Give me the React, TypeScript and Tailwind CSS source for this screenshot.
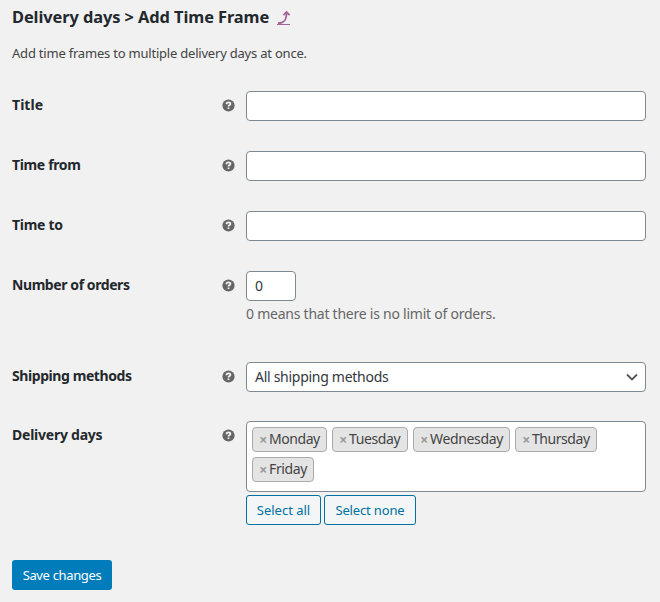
import { useState } from "react";

const allDays = ["Monday", "Tuesday", "Wednesday", "Thursday", "Friday"];

const tagStyles: Record<string, string> = {
  Monday: "w-[75px] tracking-[-0.45px]",
  Tuesday: "w-[76px] tracking-[-0.4px]",
  Wednesday: "w-[97px] tracking-[-0.35px]",
  Thursday: "w-[82px] tracking-[-0.45px]",
  Friday: "w-[62px] tracking-[-0.35px]",
};

function HelpTip() {
  return (
    <svg className="mt-[8px] mr-[11px] h-[13px] w-[13px] shrink-0" viewBox="0 0 13 13">
      <circle cx="6.5" cy="6.5" r="6.1" fill="#666" />
      <path
        d="M4.5 5.2C4.5 3.9 5.3 3.4 6.4 3.4C7.6 3.4 8.4 4 8.4 4.9C8.4 6.1 6.5 6.1 6.5 7.6M6.5 8.4V10.1"
        fill="none"
        stroke="#f1f1f1"
        strokeWidth="1.8"
      />
    </svg>
  );
}

function Row({
  label,
  tracking,
  className,
  children,
}: {
  label: string;
  tracking: string;
  className: string;
  children: React.ReactNode;
}) {
  return (
    <div className={`flex items-start ${className}`}>
      <div className="flex w-[234px] shrink-0 justify-between">
        <label className={`pt-[4px] text-[14px] leading-[20px] font-bold whitespace-nowrap text-[#23282d] ${tracking}`}>
          {label}
        </label>
        <HelpTip />
      </div>
      <div className="w-[400px] shrink-0">{children}</div>
    </div>
  );
}

export default function App() {
  const [title, setTitle] = useState("");
  const [timeFrom, setTimeFrom] = useState("");
  const [timeTo, setTimeTo] = useState("");
  const [orders, setOrders] = useState("0");
  const [days, setDays] = useState(allDays);

  const inputClass =
    "block h-[30px] w-full rounded-[4px] border border-[#7e8993] bg-white px-2 pb-[2px] text-[14px] text-[#32373c] outline-none";
  const buttonClass =
    "h-[30px] rounded-[3px] border border-[#0071a1] bg-[#f3f5f6] pt-[2px] text-[13px] whitespace-nowrap text-[#0071a1]";

  return (
    <form
      onSubmit={(e) => e.preventDefault()}
      className="h-[602px] w-[660px] overflow-hidden bg-[#f1f1f1] pl-3 font-['Noto_Sans',sans-serif] text-[#444]"
    >
      {/* Heading */}
      <h2 className="flex h-[34px] items-center text-[16.4px] font-bold whitespace-nowrap text-[#23282d]">
        <span className="w-[264px] pt-px tracking-[-0.08px]">Delivery days &gt; Add Time Frame</span>
        <a href="#" aria-label="Back">
          <svg className="mt-[2px] h-[16px] w-[15px]" viewBox="0 0 15 16" fill="none" stroke="#a46497">
            <path d="M1 14.5H14" />
            <path d="M2 13.2C7.5 13.2 10.5 11 10.5 3" strokeWidth="1.8" />
            <path d="M7.5 5.2L10.5 2L13.6 5.2" strokeWidth="1.8" />
          </svg>
        </a>
      </h2>
      <p className="mt-[9px] h-[20px] text-[13px] leading-[20px] tracking-[-0.21px] whitespace-nowrap">
        Add time frames to multiple delivery days at once.
      </p>

      <Row label="Title" tracking="tracking-[0.05px]" className="mt-[28px] h-[60px]">
        <input type="text" value={title} onChange={(e) => setTitle(e.target.value)} className={inputClass} />
      </Row>

      <Row label="Time from" tracking="tracking-[-0.35px]" className="h-[60px]">
        <input type="text" value={timeFrom} onChange={(e) => setTimeFrom(e.target.value)} className={inputClass} />
      </Row>

      <Row label="Time to" tracking="tracking-[-0.3px]" className="h-[60px]">
        <input type="text" value={timeTo} onChange={(e) => setTimeTo(e.target.value)} className={inputClass} />
      </Row>

      {/* Order limit */}
      <Row label="Number of orders" tracking="tracking-[-0.42px]" className="h-[91px]">
        <div className="w-[50px]">
          <input type="text" value={orders} onChange={(e) => setOrders(e.target.value)} className={inputClass} />
        </div>
        <p className="mt-[3px] text-[14px] leading-[20px] tracking-[-0.24px] whitespace-nowrap text-[#666]">
          0 means that there is no limit of orders.
        </p>
      </Row>

      <Row label="Shipping methods" tracking="tracking-[-0.42px]" className="h-[59px]">
        <div className="flex h-[30px] items-center justify-between rounded-[4px] border border-[#7e8993] bg-white pr-[7px] pl-2 text-[14px] text-[#32373c]">
          <span className="pb-[2px] tracking-[-0.28px]">All shipping methods</span>
          <svg className="h-[12px] w-[12px]" viewBox="0 0 12 12" fill="none" stroke="#555" strokeWidth="1.8">
            <path d="M1 3.5L6 8.5L11 3.5" />
          </svg>
        </div>
      </Row>

      {/* Delivery days */}
      <Row label="Delivery days" tracking="tracking-[-0.24px]" className="h-[139px]">
        <div className="flex h-[71px] flex-wrap content-start gap-[5px] rounded-[4px] border border-[#7e8993] bg-white pt-[5px] pl-[5px]">
          {days.map((day) => (
            <span
              key={day}
              className={`flex h-[25px] items-center rounded-[4px] border border-[#aaa] bg-[#e4e4e4] pb-[2px] pl-[6px] text-[14px] whitespace-nowrap ${tagStyles[day]}`}
            >
              <button
                type="button"
                onClick={() => setDays(days.filter((d) => d !== day))}
                className="mt-[2px] mr-[2px] flex w-[8px] justify-center text-[14px] font-bold text-[#999]"
              >
                ×
              </button>
              {day}
            </span>
          ))}
        </div>
        <div className="mt-[3px] flex gap-[3px]">
          <button type="button" onClick={() => setDays(allDays)} className={`w-[75px] tracking-[-0.02px] ${buttonClass}`}>
            Select all
          </button>
          <button type="button" onClick={() => setDays([])} className={`w-[92px] tracking-[-0.15px] ${buttonClass}`}>
            Select none
          </button>
        </div>
      </Row>

      <button
        type="submit"
        className="h-[30px] w-[100px] rounded-[3px] bg-[#007cba] pt-[2px] text-[13px] tracking-[-0.35px] whitespace-nowrap text-white"
      >
        Save changes
      </button>
    </form>
  );
}
